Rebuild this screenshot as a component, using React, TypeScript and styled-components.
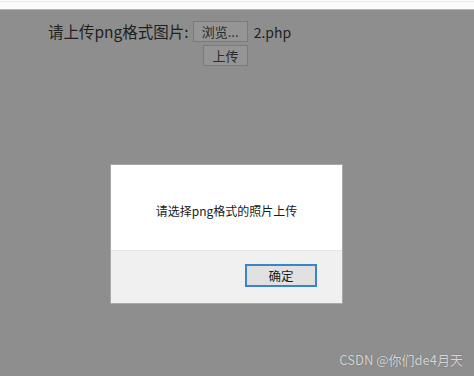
import styled, { createGlobalStyle } from 'styled-components'

const GlobalStyle = createGlobalStyle`
    html, body {
        margin: 0;
        padding: 0;
        background: #8e8e8e;
    }
    body {
        font-family: "Noto Sans CJK SC", "Noto Sans", "Liberation Sans", sans-serif;
        color: #1e1e1e;
    }
`

const Page = styled.div`
    width: 474px;
    height: 376px;
    display: flex;
    flex-direction: column;
    position: relative;
    overflow: hidden;
`

const BrowserStrip = styled.div`
    height: 9px;
    background: #fbfbfb;
    border-bottom: 1px solid #b4b4b4;
    box-shadow: inset 0 5px 0 -4px #fbfbfb, inset 0 6px 0 -4px #ececec;
    flex-shrink: 0;
`

const Stage = styled.main`
    flex: 1;
    background: #8e8e8e;
    padding: 11px 0 0 48px;
`

const Row = styled.div`
    display: flex;
    align-items: center;
    height: 21px;
`

const Label = styled.span`
    font-size: 15.5px;
    line-height: 21px;
    color: #1f1f1f;
    margin-right: 4px;
`

const GreyButton = styled.button<{ $width: number; $shift?: number }>`
    width: ${p => p.$width}px;
    height: 21px;
    margin-left: ${p => p.$shift ?? 0}px;
    padding: 0;
    background: #959595;
    border: 1px solid #7b7b7b;
    font-family: inherit;
    font-size: 13px;
    color: #2a2a2a;
    line-height: 19px;
`

const FileName = styled.span`
    font-size: 14px;
    margin-left: 6px;
    color: #1f1f1f;
`

const SecondRow = styled(Row)`
    margin-top: 3px;
`

const Dialog = styled.div`
    position: absolute;
    left: 110px;
    top: 164px;
    width: 231px;
    height: 138px;
    border: 1px solid #a8a8a8;
    background: #ffffff;
    display: flex;
    flex-direction: column;
`

const Message = styled.div`
    height: 85px;
    display: flex;
    align-items: center;
    justify-content: center;
    font-size: 12px;
    color: #1a1a1a;
    padding-top: 5px;
    box-sizing: border-box;
`

const Footer = styled.div`
    flex: 1;
    background: #f0f0f0;
    border-top: 1px solid #e6e6e6;
    display: flex;
    justify-content: flex-end;
    align-items: flex-start;
    padding: 13px 25px 0 0;
`

const OkButton = styled.button`
    width: 72px;
    height: 23px;
    background: #e1e1e1;
    border: 2px solid #3a84cc;
    font-family: inherit;
    font-size: 12.5px;
    color: #1a1a1a;
    padding: 0;
`

const Watermark = styled.div`
    position: absolute;
    right: 11px;
    bottom: 7px;
    font-size: 13px;
    color: rgba(235, 235, 235, 0.85);
    text-shadow: 0 0 1px rgba(60, 60, 60, 0.6);
`

export default function App() {
    return (
        <>
            <GlobalStyle />
            <Page>
                <BrowserStrip />
                <Stage>
                    <Row>
                        <Label>请上传png格式图片:</Label>
                        <GreyButton $width={55}>浏览...</GreyButton>
                        <FileName>2.php</FileName>
                    </Row>
                    <SecondRow>
                        <GreyButton $width={45} $shift={155}>上传</GreyButton>
                    </SecondRow>
                </Stage>
                <Dialog>
                    <Message>请选择png格式的照片上传</Message>
                    <Footer>
                        <OkButton>确定</OkButton>
                    </Footer>
                </Dialog>
                <Watermark>CSDN @你们de4月天</Watermark>
            </Page>
        </>
    )
}
